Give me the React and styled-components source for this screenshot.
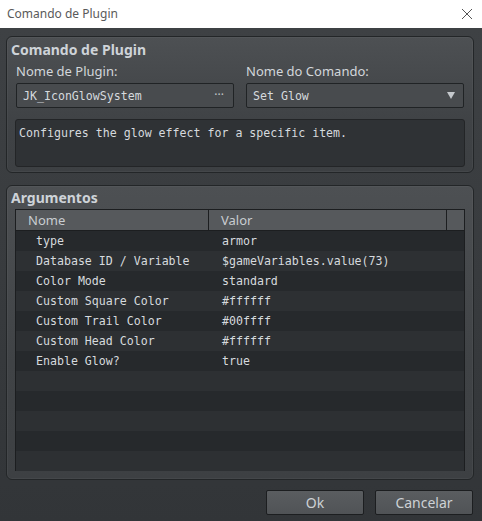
import React from "react";
import styled, { createGlobalStyle } from "styled-components";

const Global = createGlobalStyle`
  html, body { margin: 0; padding: 0; background: #36393c; }
  #root { width: 482px; height: 521px; }
  * { box-sizing: border-box; }
`;

const UI = `"Noto Sans", "Liberation Sans", sans-serif`;
const MONO = `"DejaVu Sans Mono", "Liberation Mono", monospace`;

const Window = styled.div`
  width: 482px;
  height: 521px;
  display: flex;
  flex-direction: column;
  font-family: ${UI};
  overflow: hidden;
`;

const TitleBar = styled.div`
  height: 28px;
  flex: 0 0 28px;
  background: #ffffff;
  display: flex;
  align-items: center;
  justify-content: space-between;
  padding: 0 8px 1px 7px;
  font-size: 12px;
  color: #5a5a5a;
`;

const CloseIcon = styled.svg`
  width: 12px;
  height: 12px;
  margin-right: 1px;
`;

const Body = styled.div`
  flex: 1;
  display: flex;
  flex-direction: column;
  padding: 8px 8px 8px 6px;
  background: linear-gradient(#3e4144, #323538);
`;

const Group = styled.div`
  border: 1px solid #232628;
  border-radius: 6px;
  background: linear-gradient(#4d5053, #404346 60%, #3d4043);
  box-shadow: inset 0 0 0 1px rgba(255, 255, 255, 0.04);
  display: flex;
  flex-direction: column;
  height: ${(p) => p.$h}px;
  margin-top: ${(p) => p.$mt || 0}px;
`;

const GroupTitle = styled.div`
  font-weight: 700;
  font-size: 14px;
  line-height: 18px;
  color: #ced3d8;
  padding: ${(p) => p.$pt}px 4px 0 4px;
`;

const GroupContent = styled.div`
  padding: 0 8px 0 8px;
  display: flex;
  flex-direction: column;
  flex: 1;
`;

const FieldRow = styled.div`
  display: grid;
  grid-template-columns: 218px 218px;
  column-gap: 12px;
  margin-top: 4px;
  padding-left: 1px;
`;

const Field = styled.div`
  display: flex;
  flex-direction: column;
`;

const Label = styled.div`
  font-size: 13px;
  line-height: 17px;
  color: #d3d7db;
  margin-bottom: 3px;
`;

const Input = styled.div`
  height: 25px;
  border: 1px solid #202325;
  border-radius: 2px;
  background: #484b4e;
  display: flex;
  align-items: center;
  justify-content: space-between;
  padding: 0 6px 0 6px;
  font-family: ${MONO};
  font-size: 11.6px;
  color: #d6dade;
`;

const Dots = styled.span`
  font-family: ${UI};
  font-size: 12px;
  color: #c0c4c8;
  margin-right: 3px;
  margin-top: -3px;
`;

const Arrow = styled.svg`
  width: 8px;
  height: 7px;
  margin-right: 2px;
`;

const Description = styled.div`
  margin-top: 11px;
  height: 48px;
  border: 1px solid #232527;
  border-radius: 3px;
  background: #2f3235;
  padding: 5px 3px;
  font-family: ${MONO};
  font-size: 11.6px;
  line-height: 16px;
  color: #d6dade;
`;

const Table = styled.div`
  margin-top: 2px;
  border: 1px solid #1c1e20;
  display: flex;
  flex-direction: column;
  height: 262px;
  background: #2c2f32;
`;

const HeaderRow = styled.div`
  display: grid;
  grid-template-columns: 193px 238px 1fr;
  height: 21px;
  background: #56595c;
  border-bottom: 1px solid #1c1e20;
`;

const HeaderCell = styled.div`
  font-size: 13px;
  line-height: 20px;
  color: #c9cdd1;
  padding-left: ${(p) => p.$pl}px;
  border-right: ${(p) => (p.$last ? "none" : "1px solid #1c1e20")};
`;

const Row = styled.div`
  display: grid;
  grid-template-columns: 194px 1fr;
  height: 20px;
  flex: 0 0 20px;
  background: ${(p) => (p.$odd ? "#2d3033" : "#26292c")};
  font-family: ${MONO};
  font-size: 11.6px;
  line-height: 21px;
  color: #d6dade;
`;

const Cell = styled.div`
  padding-left: ${(p) => p.$pl}px;
  white-space: nowrap;
`;

const ButtonBar = styled.div`
  display: flex;
  justify-content: flex-end;
  gap: 11px;
  margin-top: 10px;
  padding-right: 1px;
`;

const Button = styled.div`
  width: 98px;
  height: 25px;
  border: 1px solid #1c1e20;
  border-radius: 2px;
  background: linear-gradient(#5a5d60, #505356);
  display: flex;
  align-items: center;
  justify-content: center;
  font-size: 14px;
  color: #cdd1d5;
`;

const args = [
  ["type", "armor"],
  ["Database ID / Variable", "$gameVariables.value(73)"],
  ["Color Mode", "standard"],
  ["Custom Square Color", "#ffffff"],
  ["Custom Trail Color", "#00ffff"],
  ["Custom Head Color", "#ffffff"],
  ["Enable Glow?", "true"],
  ["", ""],
  ["", ""],
  ["", ""],
  ["", ""],
  ["", ""],
];

export default function App() {
  return (
    <>
      <Global />
      <Window>
        <TitleBar>
          <span>Comando de Plugin</span>
          <CloseIcon viewBox="0 0 12 12">
            <path d="M1 1 L11 11 M11 1 L1 11" stroke="#555" strokeWidth="1" />
          </CloseIcon>
        </TitleBar>
        <Body>
          <Group $h={137}>
            <GroupTitle $pt={4}>Comando de Plugin</GroupTitle>
            <GroupContent>
              <FieldRow>
                <Field>
                  <Label>Nome de Plugin:</Label>
                  <Input>
                    <span>JK_IconGlowSystem</span>
                    <Dots>···</Dots>
                  </Input>
                </Field>
                <Field>
                  <Label>Nome do Comando:</Label>
                  <Input>
                    <span>Set Glow</span>
                    <Arrow viewBox="0 0 8 7">
                      <path d="M0 0 L8 0 L4 7 Z" fill="#c4c8cc" />
                    </Arrow>
                  </Input>
                </Field>
              </FieldRow>
              <Description>Configures the glow effect for a specific item.</Description>
            </GroupContent>
          </Group>
          <Group $h={295} $mt={12}>
            <GroupTitle $pt={3}>Argumentos</GroupTitle>
            <GroupContent>
              <Table>
                <HeaderRow>
                  <HeaderCell $pl={12}>Nome</HeaderCell>
                  <HeaderCell $pl={12}>Valor</HeaderCell>
                  <HeaderCell $last />
                </HeaderRow>
                {args.map(([n, v], i) => (
                  <Row key={i} $odd={i % 2 === 1}>
                    <Cell $pl={20}>{n}</Cell>
                    <Cell $pl={12}>{v}</Cell>
                  </Row>
                ))}
              </Table>
            </GroupContent>
          </Group>
          <ButtonBar>
            <Button>Ok</Button>
            <Button>Cancelar</Button>
          </ButtonBar>
        </Body>
      </Window>
    </>
  );
}
